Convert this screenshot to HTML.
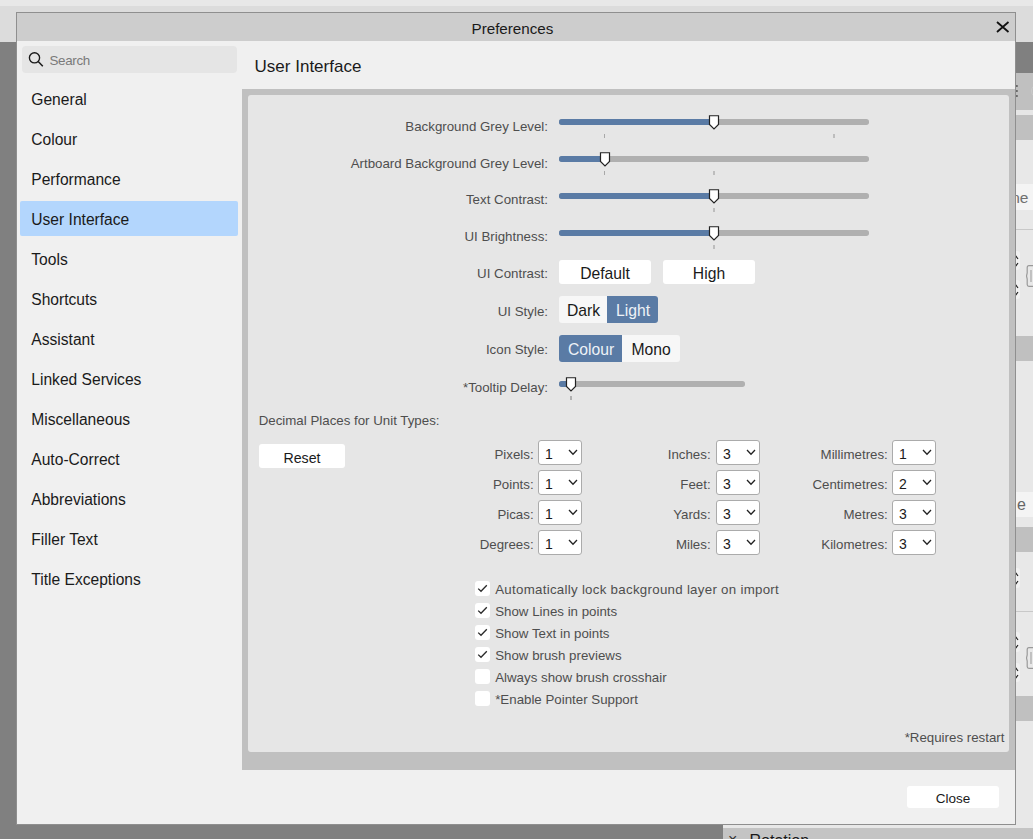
<!DOCTYPE html>
<html><head><meta charset="utf-8"><title>Preferences</title>
<style>
html,body{margin:0;padding:0;width:1033px;height:839px;overflow:hidden;background:#808080}
body{position:relative;font-family:"Liberation Sans", sans-serif}
body>div,body>svg{position:absolute}
.t{white-space:nowrap;line-height:1}
</style></head><body>
<div style="left:0px;top:0px;width:1033px;height:839px;background:#808080;"></div>
<div style="left:0px;top:0px;width:1033px;height:6px;background:#e8e8e8;"></div>
<div style="left:0px;top:6px;width:1033px;height:36px;background:#dcdcdc;"></div>
<div style="left:1016px;top:42px;width:17px;height:31px;background:#808080;"></div>
<div style="left:1016px;top:73px;width:17px;height:37px;background:#c0c0c0;"></div>
<div style="left:1016px;top:110px;width:17px;height:5px;background:#e6e6e6;"></div>
<div style="left:1016px;top:115px;width:17px;height:25px;background:#c0c0c0;"></div>
<div style="left:1016px;top:140px;width:17px;height:44px;background:#e8e8e8;"></div>
<div style="left:1016px;top:184px;width:17px;height:26px;background:#f4f4f4;"></div>
<div style="left:1016px;top:210px;width:17px;height:19px;background:#e8e8e8;"></div>
<div style="left:1016px;top:229px;width:17px;height:1px;background:#c8c8c8;"></div>
<div style="left:1016px;top:230px;width:17px;height:106px;background:#e8e8e8;"></div>
<div style="left:1016px;top:336px;width:17px;height:25px;background:#c0c0c0;"></div>
<div style="left:1016px;top:361px;width:17px;height:131px;background:#e8e8e8;"></div>
<div style="left:1016px;top:492px;width:17px;height:25px;background:#f4f4f4;"></div>
<div style="left:1016px;top:517px;width:17px;height:10px;background:#e8e8e8;"></div>
<div style="left:1016px;top:527px;width:17px;height:25px;background:#c0c0c0;"></div>
<div style="left:1016px;top:552px;width:17px;height:59px;background:#e8e8e8;"></div>
<div style="left:1016px;top:611px;width:17px;height:1px;background:#c8c8c8;"></div>
<div style="left:1016px;top:612px;width:17px;height:84px;background:#e8e8e8;"></div>
<div style="left:1016px;top:696px;width:17px;height:25px;background:#c0c0c0;"></div>
<div style="left:1016px;top:721px;width:17px;height:107px;background:#e8e8e8;"></div>
<div style="left:1016px;top:828px;width:17px;height:11px;background:#c4c4c4;"></div>
<div style="left:1016px;top:85px;width:1.5px;height:2px;background:#6a6a6a;border-radius:0 1px 1px 0;"></div>
<div style="left:1016px;top:90px;width:1.5px;height:2px;background:#6a6a6a;border-radius:0 1px 1px 0;"></div>
<div style="left:1016px;top:95px;width:1.5px;height:2px;background:#6a6a6a;border-radius:0 1px 1px 0;"></div>
<div style="left:1031px;top:84px;width:14px;height:14px;background:transparent;box-sizing:border-box;border:1.5px solid #cbcbcb;border-radius:50%;"></div>
<div style="left:1016px;top:0;width:17px;height:839px;overflow:hidden"><div class="t" style="position:absolute;right:4.5px;top:190px;font-size:15.5px;color:#707070">ne</div><div class="t" style="position:absolute;left:1px;top:497px;font-size:16px;color:#666">e</div></div>
<div style="left:1016px;top:251px;width:4px;height:19px;background:#f1f1f1;border-radius:0 3px 3px 0;"></div>
<svg style="position:absolute;left:1013px;top:255px" width="6" height="12" viewBox="0 0 6 12"><path d="M1 4 L3.2 1.5 L5 4 M1 8 L3.2 10.5 L5 8" stroke="#222" stroke-width="1.2" fill="none"/></svg>
<div style="left:1016px;top:280px;width:4px;height:19px;background:#f1f1f1;border-radius:0 3px 3px 0;"></div>
<svg style="position:absolute;left:1013px;top:284px" width="6" height="12" viewBox="0 0 6 12"><path d="M1 4 L3.2 1.5 L5 4 M1 8 L3.2 10.5 L5 8" stroke="#222" stroke-width="1.2" fill="none"/></svg>
<div style="left:1016px;top:568px;width:4px;height:20px;background:#f1f1f1;border-radius:0 3px 3px 0;"></div>
<svg style="position:absolute;left:1013px;top:572px" width="6" height="13" viewBox="0 0 6 13"><path d="M1 4 L3.2 1.5 L5 4 M1 9 L3.2 11.5 L5 9" stroke="#222" stroke-width="1.2" fill="none"/></svg>
<div style="left:1016px;top:632px;width:4px;height:20px;background:#f1f1f1;border-radius:0 3px 3px 0;"></div>
<svg style="position:absolute;left:1013px;top:636px" width="6" height="13" viewBox="0 0 6 13"><path d="M1 4 L3.2 1.5 L5 4 M1 9 L3.2 11.5 L5 9" stroke="#222" stroke-width="1.2" fill="none"/></svg>
<div style="left:1016px;top:663px;width:4px;height:19px;background:#f1f1f1;border-radius:0 3px 3px 0;"></div>
<svg style="position:absolute;left:1013px;top:667px" width="6" height="12" viewBox="0 0 6 12"><path d="M1 4 L3.2 1.5 L5 4 M1 8 L3.2 10.5 L5 8" stroke="#222" stroke-width="1.2" fill="none"/></svg>
<svg style="position:absolute;left:1026px;top:265px" width="7" height="22" viewBox="0 0 7 22"><path d="M7 0.7 H3 Q1.2 0.7 1.2 2.5 V8 L0.5 11 L1.2 14 V19.5 Q1.2 21.3 3 21.3 H7" stroke="#999" stroke-width="1.2" fill="none"/><path d="M5 5 V17" stroke="#999" stroke-width="1"/></svg>
<svg style="position:absolute;left:1026px;top:647px" width="7" height="22" viewBox="0 0 7 22"><path d="M7 0.7 H3 Q1.2 0.7 1.2 2.5 V8 L0.5 11 L1.2 14 V19.5 Q1.2 21.3 3 21.3 H7" stroke="#999" stroke-width="1.2" fill="none"/><path d="M5 5 V17" stroke="#999" stroke-width="1"/></svg>
<div style="left:723px;top:825px;width:293px;height:3px;background:#e8e8e8;"></div>
<div style="left:723px;top:828px;width:293px;height:11px;background:#c4c4c4;"></div>
<div class="t" style="left:728px;top:832px;font-size:16px;color:#333;">&#215;</div>
<div class="t" style="left:749.5px;top:833px;font-size:16px;color:#1a1a1a;">Rotation</div>
<div style="left:16px;top:12px;width:1000px;height:813px;background:#f0f0f0;box-sizing:border-box;border:1px solid #8f8f8f;"></div>
<div style="left:17px;top:13px;width:998px;height:28px;background:#cdcdcd;"></div>
<div class="t" style="left:471.5px;top:21px;font-size:15.2px;color:#1a1a1a;">Preferences</div>
<svg style="position:absolute;left:996px;top:21px" width="14" height="12" viewBox="0 0 14 12"><path d="M1 1 L12.5 11 M12.5 1 L1 11" stroke="#111" stroke-width="1.8" fill="none"/></svg>
<div style="left:22px;top:46px;width:215px;height:27px;background:#e5e5e5;border-radius:4px;"></div>
<svg style="position:absolute;left:28px;top:51px" width="18" height="18" viewBox="0 0 18 18"><circle cx="6.5" cy="6.8" r="5.1" stroke="#1a1a1a" stroke-width="1.35" fill="none"/><path d="M10.2 10.5 L14.8 15.2" stroke="#1a1a1a" stroke-width="1.5"/></svg>
<div class="t" style="left:49.5px;top:53.5px;font-size:13.4px;color:#7a7a7a;letter-spacing:-0.35px;">Search</div>
<div style="left:20px;top:201px;width:218px;height:35px;background:#b3d6fd;border-radius:2px;"></div>
<div class="t" style="left:31.3px;top:92px;font-size:15.6px;color:#1a1a1a;">General</div>
<div class="t" style="left:31.3px;top:132px;font-size:15.6px;color:#1a1a1a;">Colour</div>
<div class="t" style="left:31.3px;top:172px;font-size:15.6px;color:#1a1a1a;">Performance</div>
<div class="t" style="left:31.3px;top:212px;font-size:15.6px;color:#1a1a1a;">User Interface</div>
<div class="t" style="left:31.3px;top:252px;font-size:15.6px;color:#1a1a1a;">Tools</div>
<div class="t" style="left:31.3px;top:292px;font-size:15.6px;color:#1a1a1a;">Shortcuts</div>
<div class="t" style="left:31.3px;top:332px;font-size:15.6px;color:#1a1a1a;">Assistant</div>
<div class="t" style="left:31.3px;top:372px;font-size:15.6px;color:#1a1a1a;">Linked Services</div>
<div class="t" style="left:31.3px;top:412px;font-size:15.6px;color:#1a1a1a;">Miscellaneous</div>
<div class="t" style="left:31.3px;top:452px;font-size:15.6px;color:#1a1a1a;">Auto-Correct</div>
<div class="t" style="left:31.3px;top:492px;font-size:15.6px;color:#1a1a1a;">Abbreviations</div>
<div class="t" style="left:31.3px;top:532px;font-size:15.6px;color:#1a1a1a;">Filler Text</div>
<div class="t" style="left:31.3px;top:572px;font-size:15.6px;color:#1a1a1a;">Title Exceptions</div>
<div class="t" style="left:254.6px;top:58px;font-size:17px;color:#1a1a1a;">User Interface</div>
<div style="left:242px;top:89px;width:773px;height:681px;background:#c0c0c0;"></div>
<div style="left:248px;top:95px;width:761px;height:657px;background:#e6e6e6;border-radius:3px;"></div>
<div class="t" style="right:485px;top:120px;font-size:13.3px;color:#4e4e4e;">Background Grey Level:</div>
<div style="left:559px;top:119px;width:310px;height:5.5px;background:#b0b0b0;border-radius:2.75px;"></div>
<div style="left:559px;top:119px;width:157px;height:5.5px;background:#5a7ba5;border-radius:2.75px 0 0 2.75px;"></div>
<div style="left:604px;top:134px;width:1px;height:4px;background:#a8a8a8;"></div>
<div style="left:833px;top:134px;width:2px;height:4px;background:#bdbdbd;"></div>
<svg style="position:absolute;left:708px;top:115px" width="12" height="16" viewBox="0 0 12 16"><path d="M1.5 0.75 H10.5 V9.5 L6 14 L1.5 9.5 Z" fill="#fff" stroke="#222" stroke-width="1.2" stroke-linejoin="miter"/></svg>
<div class="t" style="right:485px;top:157px;font-size:13.3px;color:#4e4e4e;">Artboard Background Grey Level:</div>
<div style="left:559px;top:156px;width:310px;height:5.5px;background:#b0b0b0;border-radius:2.75px;"></div>
<div style="left:559px;top:156px;width:48px;height:5.5px;background:#5a7ba5;border-radius:2.75px 0 0 2.75px;"></div>
<div style="left:604px;top:171px;width:1px;height:4px;background:#a8a8a8;"></div>
<div style="left:713px;top:171px;width:2px;height:4px;background:#bdbdbd;"></div>
<svg style="position:absolute;left:599px;top:152px" width="12" height="16" viewBox="0 0 12 16"><path d="M1.5 0.75 H10.5 V9.5 L6 14 L1.5 9.5 Z" fill="#fff" stroke="#222" stroke-width="1.2" stroke-linejoin="miter"/></svg>
<div class="t" style="right:485px;top:193px;font-size:13.3px;color:#4e4e4e;">Text Contrast:</div>
<div style="left:559px;top:193px;width:310px;height:5.5px;background:#b0b0b0;border-radius:2.75px;"></div>
<div style="left:559px;top:193px;width:157px;height:5.5px;background:#5a7ba5;border-radius:2.75px 0 0 2.75px;"></div>
<div style="left:713px;top:208px;width:2px;height:4px;background:#bdbdbd;"></div>
<svg style="position:absolute;left:708px;top:189px" width="12" height="16" viewBox="0 0 12 16"><path d="M1.5 0.75 H10.5 V9.5 L6 14 L1.5 9.5 Z" fill="#fff" stroke="#222" stroke-width="1.2" stroke-linejoin="miter"/></svg>
<div class="t" style="right:485px;top:230px;font-size:13.3px;color:#4e4e4e;">UI Brightness:</div>
<div style="left:559px;top:230px;width:310px;height:5.5px;background:#b0b0b0;border-radius:2.75px;"></div>
<div style="left:559px;top:230px;width:157px;height:5.5px;background:#5a7ba5;border-radius:2.75px 0 0 2.75px;"></div>
<div style="left:713px;top:245px;width:2px;height:4px;background:#bdbdbd;"></div>
<svg style="position:absolute;left:708px;top:226px" width="12" height="16" viewBox="0 0 12 16"><path d="M1.5 0.75 H10.5 V9.5 L6 14 L1.5 9.5 Z" fill="#fff" stroke="#222" stroke-width="1.2" stroke-linejoin="miter"/></svg>
<div class="t" style="right:485px;top:267px;font-size:13.3px;color:#4e4e4e;">UI Contrast:</div>
<div style="left:559px;top:260px;width:92px;height:24px;background:#ffffff;border-radius:3px;"></div>
<div style="left:663px;top:260px;width:92px;height:24px;background:#ffffff;border-radius:3px;"></div>
<div class="t" style="left:405px;width:400px;text-align:center;top:266px;font-size:15.7px;color:#1a1a1a;">Default</div>
<div class="t" style="left:509px;width:400px;text-align:center;top:266px;font-size:15.7px;color:#1a1a1a;">High</div>
<div class="t" style="right:485px;top:305px;font-size:13.3px;color:#4e4e4e;">UI Style:</div>
<div style="left:559px;top:296px;width:99px;height:27px;background:#f7f7f7;border-radius:3px;"></div>
<div style="left:607px;top:296px;width:51px;height:27px;background:#5a7ba5;border-radius:0 3px 3px 0;"></div>
<div class="t" style="left:383.5px;width:400px;text-align:center;top:303px;font-size:15.7px;color:#1a1a1a;">Dark</div>
<div class="t" style="left:433px;width:400px;text-align:center;top:303px;font-size:15.7px;color:#eef2f7;">Light</div>
<div class="t" style="right:485px;top:343px;font-size:13.3px;color:#4e4e4e;">Icon Style:</div>
<div style="left:559px;top:335px;width:121px;height:27px;background:#f7f7f7;border-radius:3px;"></div>
<div style="left:559px;top:335px;width:63px;height:27px;background:#5a7ba5;border-radius:3px 0 0 3px;"></div>
<div class="t" style="left:391px;width:400px;text-align:center;top:342px;font-size:15.7px;color:#eef2f7;">Colour</div>
<div class="t" style="left:451px;width:400px;text-align:center;top:342px;font-size:15.7px;color:#1a1a1a;">Mono</div>
<div class="t" style="right:485px;top:381px;font-size:13.3px;color:#4e4e4e;">*Tooltip Delay:</div>
<div style="left:559px;top:381px;width:186px;height:5.5px;background:#b0b0b0;border-radius:2.75px;"></div>
<div style="left:559px;top:381px;width:14px;height:5.5px;background:#5a7ba5;border-radius:2.75px 0 0 2.75px;"></div>
<div style="left:570px;top:396px;width:1.5px;height:4px;background:#b0b0b0;"></div>
<svg style="position:absolute;left:565px;top:377px" width="12" height="16" viewBox="0 0 12 16"><path d="M1.5 0.75 H10.5 V9.5 L6 14 L1.5 9.5 Z" fill="#fff" stroke="#222" stroke-width="1.2" stroke-linejoin="miter"/></svg>
<div class="t" style="left:258.7px;top:414px;font-size:13.3px;color:#4e4e4e;">Decimal Places for Unit Types:</div>
<div style="left:259px;top:444px;width:86px;height:24px;background:#ffffff;border-radius:3px;"></div>
<div class="t" style="left:102px;width:400px;text-align:center;top:451px;font-size:14.2px;color:#1a1a1a;">Reset</div>
<div class="t" style="right:499.4px;top:448px;font-size:13.3px;color:#4e4e4e;">Pixels:</div>
<div style="left:538px;top:440px;width:44px;height:25px;background:#ffffff;box-sizing:border-box;border:1px solid #ababab;border-radius:3px;"></div>
<div class="t" style="left:545px;top:447px;font-size:14px;color:#1a1a1a;">1</div>
<svg style="position:absolute;left:568px;top:449px" width="10" height="7" viewBox="0 0 10 7"><path d="M1 1 L5 5.2 L9 1" stroke="#222" stroke-width="1.3" fill="none"/></svg>
<div class="t" style="right:499.4px;top:478px;font-size:13.3px;color:#4e4e4e;">Points:</div>
<div style="left:538px;top:470px;width:44px;height:25px;background:#ffffff;box-sizing:border-box;border:1px solid #ababab;border-radius:3px;"></div>
<div class="t" style="left:545px;top:477px;font-size:14px;color:#1a1a1a;">1</div>
<svg style="position:absolute;left:568px;top:479px" width="10" height="7" viewBox="0 0 10 7"><path d="M1 1 L5 5.2 L9 1" stroke="#222" stroke-width="1.3" fill="none"/></svg>
<div class="t" style="right:499.4px;top:508px;font-size:13.3px;color:#4e4e4e;">Picas:</div>
<div style="left:538px;top:500px;width:44px;height:25px;background:#ffffff;box-sizing:border-box;border:1px solid #ababab;border-radius:3px;"></div>
<div class="t" style="left:545px;top:507px;font-size:14px;color:#1a1a1a;">1</div>
<svg style="position:absolute;left:568px;top:509px" width="10" height="7" viewBox="0 0 10 7"><path d="M1 1 L5 5.2 L9 1" stroke="#222" stroke-width="1.3" fill="none"/></svg>
<div class="t" style="right:499.4px;top:538px;font-size:13.3px;color:#4e4e4e;">Degrees:</div>
<div style="left:538px;top:530px;width:44px;height:25px;background:#ffffff;box-sizing:border-box;border:1px solid #ababab;border-radius:3px;"></div>
<div class="t" style="left:545px;top:537px;font-size:14px;color:#1a1a1a;">1</div>
<svg style="position:absolute;left:568px;top:539px" width="10" height="7" viewBox="0 0 10 7"><path d="M1 1 L5 5.2 L9 1" stroke="#222" stroke-width="1.3" fill="none"/></svg>
<div class="t" style="right:322.4px;top:448px;font-size:13.3px;color:#4e4e4e;">Inches:</div>
<div style="left:716px;top:440px;width:44px;height:25px;background:#ffffff;box-sizing:border-box;border:1px solid #ababab;border-radius:3px;"></div>
<div class="t" style="left:723px;top:447px;font-size:14px;color:#1a1a1a;">3</div>
<svg style="position:absolute;left:746px;top:449px" width="10" height="7" viewBox="0 0 10 7"><path d="M1 1 L5 5.2 L9 1" stroke="#222" stroke-width="1.3" fill="none"/></svg>
<div class="t" style="right:322.4px;top:478px;font-size:13.3px;color:#4e4e4e;">Feet:</div>
<div style="left:716px;top:470px;width:44px;height:25px;background:#ffffff;box-sizing:border-box;border:1px solid #ababab;border-radius:3px;"></div>
<div class="t" style="left:723px;top:477px;font-size:14px;color:#1a1a1a;">3</div>
<svg style="position:absolute;left:746px;top:479px" width="10" height="7" viewBox="0 0 10 7"><path d="M1 1 L5 5.2 L9 1" stroke="#222" stroke-width="1.3" fill="none"/></svg>
<div class="t" style="right:322.4px;top:508px;font-size:13.3px;color:#4e4e4e;">Yards:</div>
<div style="left:716px;top:500px;width:44px;height:25px;background:#ffffff;box-sizing:border-box;border:1px solid #ababab;border-radius:3px;"></div>
<div class="t" style="left:723px;top:507px;font-size:14px;color:#1a1a1a;">3</div>
<svg style="position:absolute;left:746px;top:509px" width="10" height="7" viewBox="0 0 10 7"><path d="M1 1 L5 5.2 L9 1" stroke="#222" stroke-width="1.3" fill="none"/></svg>
<div class="t" style="right:322.4px;top:538px;font-size:13.3px;color:#4e4e4e;">Miles:</div>
<div style="left:716px;top:530px;width:44px;height:25px;background:#ffffff;box-sizing:border-box;border:1px solid #ababab;border-radius:3px;"></div>
<div class="t" style="left:723px;top:537px;font-size:14px;color:#1a1a1a;">3</div>
<svg style="position:absolute;left:746px;top:539px" width="10" height="7" viewBox="0 0 10 7"><path d="M1 1 L5 5.2 L9 1" stroke="#222" stroke-width="1.3" fill="none"/></svg>
<div class="t" style="right:145.20000000000005px;top:448px;font-size:13.3px;color:#4e4e4e;">Millimetres:</div>
<div style="left:892px;top:440px;width:44px;height:25px;background:#ffffff;box-sizing:border-box;border:1px solid #ababab;border-radius:3px;"></div>
<div class="t" style="left:899px;top:447px;font-size:14px;color:#1a1a1a;">1</div>
<svg style="position:absolute;left:922px;top:449px" width="10" height="7" viewBox="0 0 10 7"><path d="M1 1 L5 5.2 L9 1" stroke="#222" stroke-width="1.3" fill="none"/></svg>
<div class="t" style="right:145.20000000000005px;top:478px;font-size:13.3px;color:#4e4e4e;">Centimetres:</div>
<div style="left:892px;top:470px;width:44px;height:25px;background:#ffffff;box-sizing:border-box;border:1px solid #ababab;border-radius:3px;"></div>
<div class="t" style="left:899px;top:477px;font-size:14px;color:#1a1a1a;">2</div>
<svg style="position:absolute;left:922px;top:479px" width="10" height="7" viewBox="0 0 10 7"><path d="M1 1 L5 5.2 L9 1" stroke="#222" stroke-width="1.3" fill="none"/></svg>
<div class="t" style="right:145.20000000000005px;top:508px;font-size:13.3px;color:#4e4e4e;">Metres:</div>
<div style="left:892px;top:500px;width:44px;height:25px;background:#ffffff;box-sizing:border-box;border:1px solid #ababab;border-radius:3px;"></div>
<div class="t" style="left:899px;top:507px;font-size:14px;color:#1a1a1a;">3</div>
<svg style="position:absolute;left:922px;top:509px" width="10" height="7" viewBox="0 0 10 7"><path d="M1 1 L5 5.2 L9 1" stroke="#222" stroke-width="1.3" fill="none"/></svg>
<div class="t" style="right:145.20000000000005px;top:538px;font-size:13.3px;color:#4e4e4e;">Kilometres:</div>
<div style="left:892px;top:530px;width:44px;height:25px;background:#ffffff;box-sizing:border-box;border:1px solid #ababab;border-radius:3px;"></div>
<div class="t" style="left:899px;top:537px;font-size:14px;color:#1a1a1a;">3</div>
<svg style="position:absolute;left:922px;top:539px" width="10" height="7" viewBox="0 0 10 7"><path d="M1 1 L5 5.2 L9 1" stroke="#222" stroke-width="1.3" fill="none"/></svg>
<div style="left:475px;top:581px;width:15px;height:15px;background:#ffffff;border-radius:3px;"></div>
<svg style="position:absolute;left:475px;top:581px" width="15" height="15" viewBox="0 0 15 15"><path d="M3.2 7.6 L6 10.3 L11.8 4.3" stroke="#2a2a2a" stroke-width="1.3" fill="none"/></svg>
<div class="t" style="left:495.2px;top:583px;font-size:13.3px;color:#4e4e4e;letter-spacing:0.28px;">Automatically lock background layer on import</div>
<div style="left:475px;top:603px;width:15px;height:15px;background:#ffffff;border-radius:3px;"></div>
<svg style="position:absolute;left:475px;top:603px" width="15" height="15" viewBox="0 0 15 15"><path d="M3.2 7.6 L6 10.3 L11.8 4.3" stroke="#2a2a2a" stroke-width="1.3" fill="none"/></svg>
<div class="t" style="left:495.2px;top:605px;font-size:13.3px;color:#4e4e4e;">Show Lines in points</div>
<div style="left:475px;top:625px;width:15px;height:15px;background:#ffffff;border-radius:3px;"></div>
<svg style="position:absolute;left:475px;top:625px" width="15" height="15" viewBox="0 0 15 15"><path d="M3.2 7.6 L6 10.3 L11.8 4.3" stroke="#2a2a2a" stroke-width="1.3" fill="none"/></svg>
<div class="t" style="left:495.2px;top:627px;font-size:13.3px;color:#4e4e4e;">Show Text in points</div>
<div style="left:475px;top:647px;width:15px;height:15px;background:#ffffff;border-radius:3px;"></div>
<svg style="position:absolute;left:475px;top:647px" width="15" height="15" viewBox="0 0 15 15"><path d="M3.2 7.6 L6 10.3 L11.8 4.3" stroke="#2a2a2a" stroke-width="1.3" fill="none"/></svg>
<div class="t" style="left:495.2px;top:649px;font-size:13.3px;color:#4e4e4e;">Show brush previews</div>
<div style="left:475px;top:669px;width:15px;height:15px;background:#ffffff;border-radius:3px;"></div>
<div class="t" style="left:495.2px;top:671px;font-size:13.3px;color:#4e4e4e;">Always show brush crosshair</div>
<div style="left:475px;top:691px;width:15px;height:15px;background:#ffffff;border-radius:3px;"></div>
<div class="t" style="left:495.2px;top:693px;font-size:13.3px;color:#4e4e4e;">*Enable Pointer Support</div>
<div class="t" style="right:28.600000000000023px;top:731px;font-size:13.3px;color:#4e4e4e;">*Requires restart</div>
<div style="left:907px;top:786px;width:92px;height:22px;background:#ffffff;border-radius:3px;"></div>
<div class="t" style="left:753px;width:400px;text-align:center;top:792px;font-size:13.5px;color:#1a1a1a;">Close</div>
</body></html>
